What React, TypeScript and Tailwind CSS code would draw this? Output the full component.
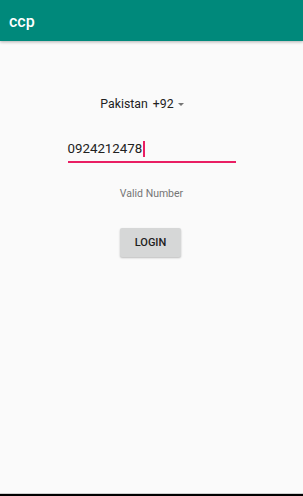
export default function App() {
  return (
    <div
      className="flex h-[496px] w-full flex-col bg-[#fafafa]"
      style={{ fontFamily: "Roboto, 'Noto Sans', sans-serif" }}
    >
      <header className="flex h-[41px] shrink-0 items-center bg-[#00897b] pl-[9px] pt-[3px] shadow-[0_1px_3px_rgba(0,0,0,0.3)]">
        <h1 className="text-[16px] font-medium leading-none text-white">ccp</h1>
      </header>

      <main className="flex flex-1 flex-col items-center">
        <div className="mt-[55px] mr-[19px] flex h-[16px] items-center text-[12.3px] leading-none text-[#212121]">
          <span>Pakistan</span>
          <span className="ml-[5px]">+92</span>
          <svg className="ml-[4px]" width="6" height="3" viewBox="0 0 6 3">
            <path d="M0 0h6L3 3z" fill="#757575" />
          </svg>
        </div>

        <div className="mt-[26px] w-[168px]">
          <div className="flex h-[20px] items-center pt-[2px] text-[13.3px] leading-none text-[#212121]">
            <span>0924212478</span>
            <span className="ml-[1px] h-[16px] w-[1.5px] bg-[#e91e63]" />
          </div>
          <div className="mt-[3px] h-[2px] w-full bg-[#e91e63]" />
        </div>

        <p className="mt-[26px] text-[10.5px] leading-none text-[#757575]">Valid Number</p>

        <button
          type="button"
          className="mt-[28px] mr-[2px] flex h-[29px] w-[61px] items-center justify-center rounded-[2px] bg-[#d6d7d7] text-[11px] font-medium leading-none text-[#212121] shadow-[0_1px_2px_rgba(0,0,0,0.25)]"
        >
          LOGIN
        </button>
      </main>

      <div className="h-[3px] shrink-0 border-t border-[#cfcfcf] bg-black" />
    </div>
  );
}
